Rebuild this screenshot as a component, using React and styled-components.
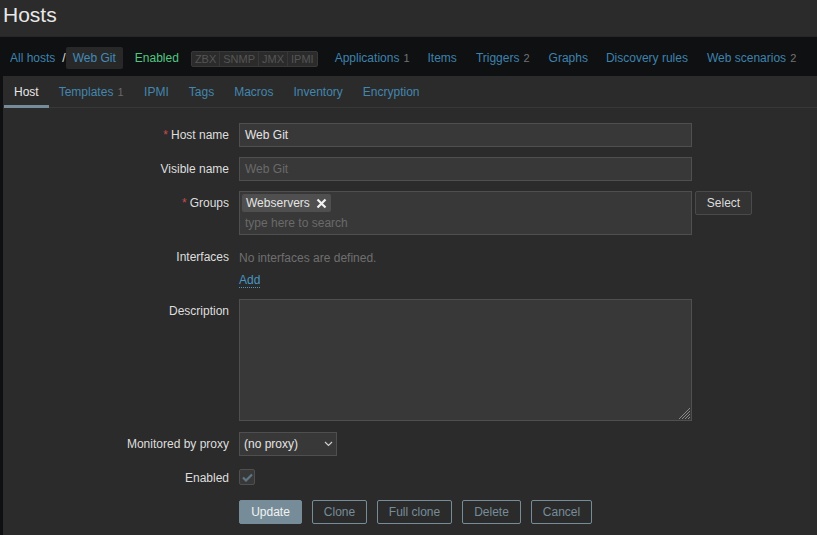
import React from 'react';
import styled, { createGlobalStyle } from 'styled-components';

const Global = createGlobalStyle`
  html, body { margin: 0; padding: 0; background: #0e1012; }
  body { font: 12px/14px "Liberation Sans", Arial, sans-serif; color: #f2f2f2; overflow: hidden; }
  * { box-sizing: border-box; }
`;

const Page = styled.div`
  width: 817px;
  height: 535px;
  display: flex;
  flex-direction: column;
  overflow: hidden;
  background: #0e1012;
`;
const Header = styled.header`
  height: 37px;
  flex: none;
  background: #2b2b2b;
  border-bottom: 1px solid #262626;
  padding: 3px 0 0 3px;
`;
const Title = styled.h1`
  margin: 0;
  font-size: 21px;
  line-height: 24px;
  font-weight: 400;
  color: #e8e8e8;
`;
const HostNav = styled.nav`
  height: 39px;
  flex: none;
  display: flex;
  align-items: center;
  padding: 2px 0 0 10px;
  white-space: nowrap;
`;
const Link = styled.a`
  color: #4796c4;
  opacity: .86;
`;
const NavLink = styled(Link)`
  margin-left: ${p => p.$gap ?? 0}px;
`;
const Count = styled.span`
  color: #737373;
  font-size: 11px;
  margin-left: 4px;
`;
const TabCount = styled(Count)`
  margin-right: .6px;
`;
const Sep = styled.span`
  color: #e0e0e0;
  margin: 0 0 0 7px;
`;
const Current = styled.span`
  display: flex;
  align-items: center;
  height: 22px;
  margin-top: 1px;
  padding: 0 7px;
  border-radius: 2px;
  background: #2b2b2b;
  color: #4796c4;
  opacity: .92;
`;
const Status = styled.span`
  color: #59db8f;
  opacity: .9;
  margin-left: 12px;
`;
const Availability = styled.div`
  display: flex;
  height: 16px;
  margin: 3px 0 0 12px;
  border: 1px solid #383838;
  border-radius: 2px;
  background: #2b2b2b;
`;
const Badge = styled.span`
  font-size: 11px;
  line-height: 14px;
  color: #555;
  padding: 0 3px;
  border-left: ${p => (p.$first ? 'none' : '1px solid #383838')};
`;
const Main = styled.main`
  flex: 1;
  margin-left: 3px;
  background: #2b2b2b;
  min-height: 0;
`;
const Tabs = styled.div`
  height: 32px;
  display: flex;
  padding-left: 1px;
  border-bottom: 1px solid #383838;
`;
const Tab = styled.a`
  height: 32px;
  padding: 9px 10px 0;
  color: ${p => (p.$active ? '#e8e8e8' : '#4796c4')};
  opacity: ${p => (p.$active ? 1 : .86)};
  border-bottom: 3px solid ${p => (p.$active ? '#768d99' : 'transparent')};
  white-space: nowrap;
`;
const Form = styled.form`
  display: grid;
  grid-template-columns: 226px 453px;
  column-gap: 10px;
  padding-top: 15px;
  align-items: start;
`;
const Label = styled.label`
  grid-column: 1;
  text-align: right;
  color: #dedede;
  margin-top: ${p => p.$mt ?? 0}px;
  padding-top: ${p => p.$pt ?? 5}px;
`;
const Req = styled.span`
  color: #e45959;
  opacity: .8;
  margin-right: 3px;
`;
const Cell = styled.div`
  grid-column: 2;
  position: relative;
  margin-top: ${p => p.$mt ?? 0}px;
`;
const Input = styled.div`
  height: 24px;
  padding: 4px 5px;
  background: #383838;
  border: 1px solid #4f4f4f;
  color: ${p => (p.$muted ? '#6a6a6a' : '#e4e4e4')};
`;
const Multi = styled.div`
  height: 44px;
  padding: 2px 2px 0;
  background: #383838;
  border: 1px solid #4f4f4f;
`;
const Chip = styled.span`
  display: inline-flex;
  align-items: center;
  height: 18px;
  padding: 0 4px;
  gap: 6px;
  width: 89px;
  background: #4f4f4f;
  border-radius: 2px;
  color: #e4e4e4;
`;
const Placeholder = styled.div`
  color: #6a6a6a;
  padding: 4px 0 0 3px;
`;
const SelectBtn = styled.button`
  position: absolute;
  left: 456px;
  top: 0;
  width: 57px;
  height: 24px;
  padding: 0;
  font: inherit;
  color: #dcdcdc;
  background: #333;
  border: 1px solid #4a4a4a;
  border-radius: 2px;
`;
const Muted = styled.div`
  color: #6f6f6f;
  height: 14px;
`;
const AddLink = styled.a`
  display: inline-block;
  margin-top: 8px;
  color: #4796c4;
  line-height: 14px;
  border-bottom: 1px dotted #4796c4;
`;
const Area = styled.div`
  height: 122px;
  background: #383838;
  border: 1px solid #4f4f4f;
  position: relative;
`;
const Grip = styled.svg`
  position: absolute;
  right: 0;
  bottom: 0;
`;
const Dropdown = styled.div`
  width: 98px;
  height: 24px;
  display: flex;
  align-items: center;
  justify-content: space-between;
  padding: 0 3px 0 4px;
  background: #383838;
  border: 1px solid #4f4f4f;
  color: #e4e4e4;
`;
const Check = styled.div`
  width: 16px;
  height: 16px;
  display: flex;
  align-items: center;
  justify-content: center;
  background: #383838;
  border: 1px solid #4f4f4f;
  border-radius: 2px;
`;
const Actions = styled.div`
  display: flex;
  gap: 10px;
`;
const Button = styled.button`
  height: 24px;
  width: ${p => p.$w}px;
  padding: 0;
  font: inherit;
  border-radius: 2px;
  border: 1px solid #768d99;
  color: ${p => (p.$primary ? '#f2f2f2' : '#768d99')};
  background: ${p => (p.$primary ? '#768d99' : 'transparent')};
`;

export default function App() {
  return (
    <Page>
      <Global />
      <Header><Title>Hosts</Title></Header>
      <HostNav>
        <Link>All hosts</Link>
        <Sep>/</Sep>
        <Current>Web Git</Current>
        <Status>Enabled</Status>
        <Availability>
          <Badge $first>ZBX</Badge><Badge>SNMP</Badge><Badge>JMX</Badge><Badge>IPMI</Badge>
        </Availability>
        <NavLink $gap={17}>Applications</NavLink><Count>1</Count>
        <NavLink $gap={18}>Items</NavLink>
        <NavLink $gap={19}>Triggers</NavLink><Count>2</Count>
        <NavLink $gap={19}>Graphs</NavLink>
        <NavLink $gap={18}>Discovery rules</NavLink>
        <NavLink $gap={19}>Web scenarios</NavLink><Count>2</Count>
      </HostNav>
      <Main>
        <Tabs>
          <Tab $active>Host</Tab>
          <Tab>Templates<TabCount>1</TabCount></Tab>
          <Tab>IPMI</Tab>
          <Tab>Tags</Tab>
          <Tab>Macros</Tab>
          <Tab>Inventory</Tab>
          <Tab>Encryption</Tab>
        </Tabs>
        <Form>
          <Label><Req>*</Req>Host name</Label>
          <Cell><Input>Web Git</Input></Cell>
          <Label $mt={10}>Visible name</Label>
          <Cell $mt={10}><Input $muted>Web Git</Input></Cell>
          <Label $mt={10}><Req>*</Req>Groups</Label>
          <Cell $mt={10}>
            <Multi>
              <Chip>Webservers
                <svg width="11" height="11" viewBox="0 0 11 11"><path d="M1.5 1.5l8 8M9.5 1.5l-8 8" stroke="#f2f2f2" strokeWidth="2.2" /></svg>
              </Chip>
              <Placeholder>type here to search</Placeholder>
            </Multi>
            <SelectBtn type="button">Select</SelectBtn>
          </Cell>
          <Label $mt={10}>Interfaces</Label>
          <Cell $mt={16}>
            <Muted>No interfaces are defined.</Muted>
            <AddLink>Add</AddLink>
          </Cell>
          <Label $mt={11}>Description</Label>
          <Cell $mt={11}>
            <Area>
              <Grip width="13" height="13" viewBox="0 0 13 13">
                <path d="M1 12L12 1M4 12l8-8M7 12l5-5M10 12l2-2" stroke="#8a8a8a" strokeWidth="1" />
              </Grip>
            </Area>
          </Cell>
          <Label $mt={11}>Monitored by proxy</Label>
          <Cell $mt={11}>
            <Dropdown>(no proxy)
              <svg width="9" height="6" viewBox="0 0 9 6" fill="none"><path d="M1 1l3.5 3.5L8 1" stroke="#d0d0d0" strokeWidth="1.2" /></svg>
            </Dropdown>
          </Cell>
          <Label $mt={10}>Enabled</Label>
          <Cell $mt={13}>
            <Check>
              <svg width="11" height="9" viewBox="0 0 11 9" fill="none"><path d="M1 4.5l3 3 6-6" stroke="#5f7683" strokeWidth="2.2" /></svg>
            </Check>
          </Cell>
          <Cell $mt={15}>
            <Actions>
              <Button $primary $w={63}>Update</Button>
              <Button $w={55}>Clone</Button>
              <Button $w={75}>Full clone</Button>
              <Button $w={59}>Delete</Button>
              <Button $w={61}>Cancel</Button>
            </Actions>
          </Cell>
        </Form>
      </Main>
    </Page>
  );
}
